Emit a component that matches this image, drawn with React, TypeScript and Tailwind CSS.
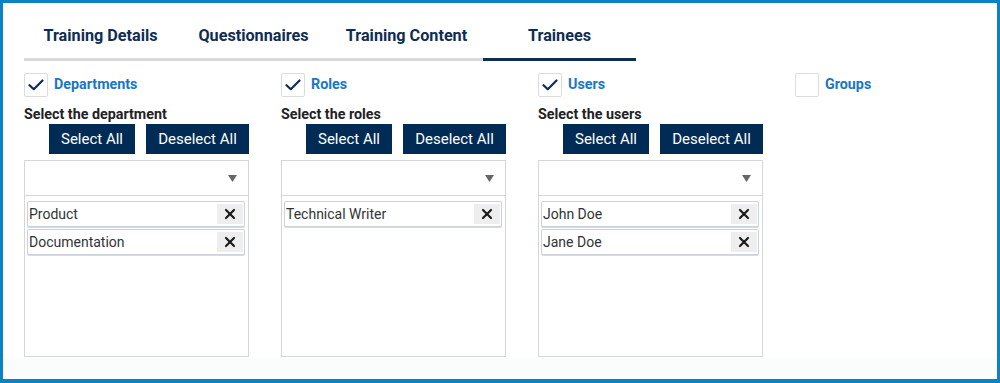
import { X } from "lucide-react";

type Column = {
  label: string;
  heading?: string;
  checked: boolean;
  items?: string[];
};

const tabs = ["Training Details", "Questionnaires", "Training Content", "Trainees"];

const columns: Column[] = [
  { label: "Departments", heading: "Select the department", checked: true, items: ["Product", "Documentation"] },
  { label: "Roles", heading: "Select the roles", checked: true, items: ["Technical Writer"] },
  { label: "Users", heading: "Select the users", checked: true, items: ["John Doe", "Jane Doe"] },
  { label: "Groups", checked: false },
];

function Checkbox({ checked }: { checked: boolean }) {
  return (
    <div className="flex h-[24px] w-[24px] items-center justify-center rounded-[2px] border border-[#dcdcdc] bg-white">
      {checked && (
        <svg width="16" height="12" viewBox="0 0 16 12" fill="none">
          <path d="M1.5 6.2 L5.8 10.2 L14.5 1.5" stroke="#0f2d52" strokeWidth="2.2" strokeLinecap="round" strokeLinejoin="round" />
        </svg>
      )}
    </div>
  );
}

function Chip({ text }: { text: string }) {
  return (
    <div className="flex h-[26px] items-center justify-between rounded-[2px] border border-[#c9d2de] bg-white pl-[1px] pr-[1px] shadow-[0_1px_0_#d5dbe3]">
      <span className="text-[14px] text-[#333]">{text}</span>
      <span className="flex h-[20px] w-[26px] items-center justify-center bg-[#eeeeee]">
        <X size={16} strokeWidth={3.2} color="#1c1c1c" />
      </span>
    </div>
  );
}

function SelectColumn({ col }: { col: Column }) {
  return (
    <div className={col.heading ? "w-[225px] shrink-0" : "shrink-0"}>
      <div className="flex items-center gap-[6px]">
        <Checkbox checked={col.checked} />
        <span className="text-[14.3px] font-bold text-[#1a77c2]">{col.label}</span>
      </div>
      {col.heading && (
        <>
          <div className="mt-[7px] text-[14.3px] font-bold leading-[20px] text-[#222]">{col.heading}</div>
          <div className="flex justify-end gap-[11px]">
            <button className="h-[30px] w-[86px] bg-[#002b55] text-[15px] text-white">Select All</button>
            <button className="h-[30px] w-[103px] bg-[#002b55] text-[15px] text-white">Deselect All</button>
          </div>
          <div className="mt-[6px] h-[197px] border border-[#d6d6d6] bg-white">
            <div className="flex h-[35px] items-center justify-end border-b border-[#d6d6d6] pr-[11px]">
              <svg width="9" height="7" viewBox="0 0 9 7">
                <path d="M0 0 H9 L4.5 7 Z" fill="#666" />
              </svg>
            </div>
            <div className="flex flex-col gap-[2px] pl-[2px] pr-[3px] pt-[5px]">
              {col.items?.map((item) => (
                <Chip key={item} text={item} />
              ))}
            </div>
          </div>
        </>
      )}
    </div>
  );
}

export default function App() {
  return (
    <div
      className="h-[383px] w-[1000px] border-[3px] border-b-[4px] border-[#0b82c4] bg-white"
      style={{ fontFamily: "Roboto, 'Noto Sans', sans-serif" }}
    >
      <div className="flex h-full flex-col">
        <div className="px-[21px] pt-[12px]">
          <div className="flex">
            {tabs.map((tab, i) => (
              <div
                key={tab}
                className={
                  i === 3
                    ? "flex h-[46px] w-[153px] items-center justify-center border-b-[3px] border-[#0f2d52] text-[16.2px] font-bold text-[#0f2d52]"
                    : "flex h-[46px] w-[153px] items-center justify-center border-b-[3px] border-[#d9d9d9] text-[16.2px] font-bold text-[#0f2d52]"
                }
              >
                {tab}
              </div>
            ))}
          </div>
          <div className="mt-[12px] flex gap-[32px]">
            {columns.map((col) => (
              <SelectColumn key={col.label} col={col} />
            ))}
          </div>
        </div>
        <div className="mt-[1px] flex-1 bg-[#fbfcfc]" />
      </div>
    </div>
  );
}
